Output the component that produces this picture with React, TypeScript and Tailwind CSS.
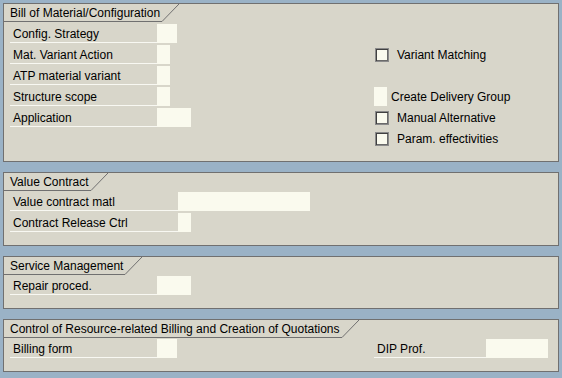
import React from "react";

const font = { fontFamily: '"Liberation Sans", Arial, sans-serif' };

function Tab({ title }: { title: string }) {
  return (
    <div className="flex h-[18px] items-stretch">
      <div className="flex items-center border-b border-[#707070] pl-[6px] pr-[2px] text-[12px] leading-none text-black">
        {title}
      </div>
      <svg width="17" height="18" className="block">
        <line x1="0" y1="17.5" x2="17" y2="0" stroke="#707070" strokeWidth="1" />
      </svg>
    </div>
  );
}

function Panel({ title, children, bottom = "pb-[13px]" }: { title: string; children: React.ReactNode; bottom?: string }) {
  return (
    <div className={`border border-[#707070] bg-[#d8d6ca] ${bottom}`}>
      <Tab title={title} />
      {children}
    </div>
  );
}

function Label({ text, width }: { text: string; width: string }) {
  return (
    <div className={`flex h-[19px] items-center border-b border-[#f8f8f2] pl-[3px] pt-[1px] text-[12px] text-black ${width}`}>
      {text}
    </div>
  );
}

function Field({ width }: { width: string }) {
  return <div className={`h-[19px] bg-[#fafaee] ${width}`} />;
}

function Check({ text }: { text: string }) {
  return (
    <div className="flex h-[19px] items-center">
      <div className="h-[14px] w-[14px] border border-[#8a8a8a] bg-[#fafaee] shadow-[inset_1px_1px_0_#404040,inset_-1px_-1px_0_#6a6a6a]" />
      <span className="ml-[8px] text-[12px] text-black">{text}</span>
    </div>
  );
}

function Row({ label, field, labelW = "w-[147px]" }: { label: string; field: string; labelW?: string }) {
  return (
    <div className="flex h-[19px]">
      <Label text={label} width={labelW} />
      <Field width={field} />
    </div>
  );
}

export default function App() {
  return (
    <div style={font} className="flex h-[378px] w-[562px] flex-col gap-[10px] bg-[#9ab2c6] px-[3px] pt-[3px]">
      <Panel title="Bill of Material/Configuration">
        <div className="mt-[2px] grid grid-cols-[364px_1fr] grid-rows-[repeat(6,19px)] gap-y-[2px] pl-[6px]">
          <div className="col-start-1 row-start-1"><Row label="Config. Strategy" field="w-[20px]" /></div>
          <div className="col-start-1 row-start-2"><Row label="Mat. Variant Action" field="w-[13px]" /></div>
          <div className="col-start-1 row-start-3"><Row label="ATP material variant" field="w-[13px]" /></div>
          <div className="col-start-1 row-start-4"><Row label="Structure scope" field="w-[13px]" /></div>
          <div className="col-start-1 row-start-5"><Row label="Application" field="w-[34px]" /></div>
          <div className="col-start-2 row-start-2 pl-[1px]"><Check text="Variant Matching" /></div>
          <div className="col-start-2 row-start-4 flex items-center">
            <Field width="w-[13px]" />
            <span className="ml-[4px] text-[12px] text-black">Create Delivery Group</span>
          </div>
          <div className="col-start-2 row-start-5 pl-[1px]"><Check text="Manual Alternative" /></div>
          <div className="col-start-2 row-start-6 pl-[1px]"><Check text="Param. effectivities" /></div>
        </div>
      </Panel>

      <Panel title="Value Contract" bottom="pb-[13px]">
        <div className="mt-[1px] flex flex-col gap-[2px] pl-[6px]">
          <Row label="Value contract matl" field="w-[132px]" labelW="w-[168px]" />
          <Row label="Contract Release Ctrl" field="w-[13px]" labelW="w-[168px]" />
        </div>
      </Panel>

      <Panel title="Service Management">
        <div className="mt-[1px] flex flex-col pl-[6px]">
          <Row label="Repair proced." field="w-[34px]" />
        </div>
      </Panel>

      <Panel title="Control of Resource-related Billing and Creation of Quotations">
        <div className="mt-[1px] flex pl-[6px]">
          <Row label="Billing form" field="w-[20px]" />
          <div className="ml-[197px]">
            <Row label="DIP Prof." field="w-[62px]" labelW="w-[112px]" />
          </div>
        </div>
      </Panel>
    </div>
  );
}
